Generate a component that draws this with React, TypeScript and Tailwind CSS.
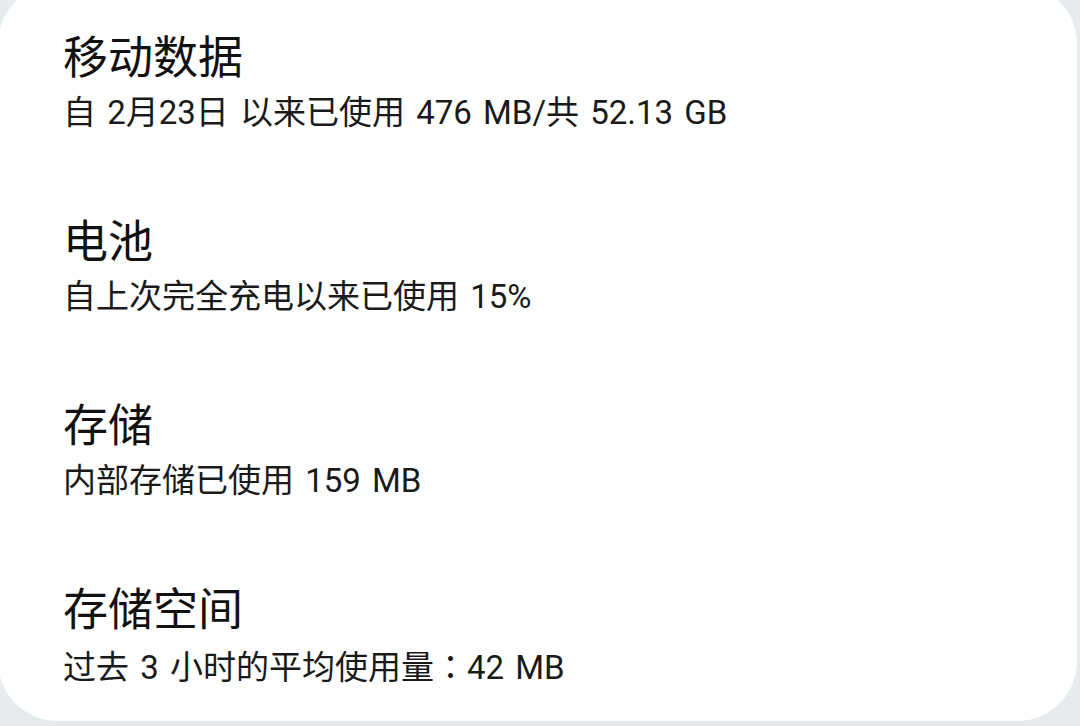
export default function App() {
  const items: { title: string; sub: React.ReactNode }[] = [
    { title: "移动数据", sub: "自 2月23日 以来已使用 476 MB/共 52.13 GB" },
    { title: "电池", sub: "自上次完全充电以来已使用 15%" },
    { title: "存储", sub: "内部存储已使用 159 MB" },
    {
      title: "存储空间",
      sub: (
        <>
          过去 3 小时的平均使用量
          <span style={{ fontFamily: '"Noto Sans CJK TC", sans-serif' }}>：</span>
          42 MB
        </>
      ),
    },
  ];
  return (
    <div
      className="w-[1080px] h-[726px] overflow-hidden bg-[#e6ecee]"
      style={{ fontFamily: 'Roboto, "Noto Sans CJK SC", sans-serif' }}
    >
      <div className="ml-[-2px] mt-[-16px] w-[1079px] h-[737px] rounded-[60px] bg-white pl-[65px] pt-[47px] flex flex-col gap-[82px]">
        {items.map((it) => (
          <div key={it.title} className="flex flex-col">
            <div className="text-[45px] leading-[56px] text-[#111111]">{it.title}</div>
            <div className="mt-[6px] text-[33px] leading-[40px] [word-spacing:3px] text-[#1a1a1a]">{it.sub}</div>
          </div>
        ))}
      </div>
    </div>
  );
}
